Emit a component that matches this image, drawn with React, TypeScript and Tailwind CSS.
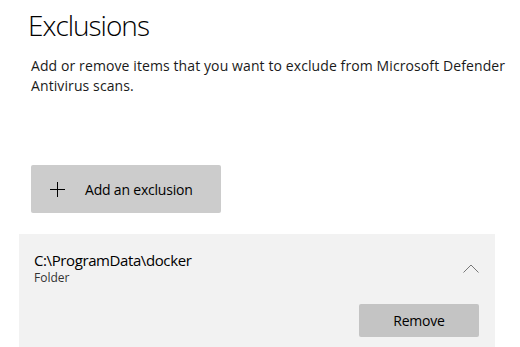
import React from "react";

export default function App() {
  return (
    <div
      className="w-[520px] h-[347px] overflow-hidden bg-white text-black"
      style={{ fontFamily: '"Open Sans", "Noto Sans", sans-serif' }}
    >
      <h1 className="pl-[28px] pt-[6px] text-[28px] leading-[38px] font-light tracking-[-1px]">
        Exclusions
      </h1>
      <p className="pl-[31px] pt-[12px] pr-[4px] text-[14px] leading-[20px] tracking-[0.1px] text-[#1a1a1a]">
        Add or remove items that you want to exclude from Microsoft Defender
        <br />
        Antivirus scans.
      </p>
      <div className="pl-[31px] pt-[69px]">
        <button className="flex h-[48px] w-[190px] items-center rounded-[2px] bg-[#cccccc] pl-[19px]">
          <svg width="15" height="15" viewBox="0 0 15 15" className="shrink-0">
            <path d="M7.5 0V15M0 7.5H15" stroke="#000" strokeWidth="1" />
          </svg>
          <span className="ml-[20px] text-[14px] tracking-[-0.2px]">Add an exclusion</span>
        </button>
      </div>
      <div className="ml-[19px] mt-[21px] w-[476px] h-[140px] bg-[#f2f2f2] pl-[15px] pr-[16px] pt-[16px]">
        <div className="flex items-start justify-between">
          <div>
            <div className="text-[15px] leading-[20px] tracking-[-0.4px]">C:\ProgramData\docker</div>
            <div className="text-[12px] leading-[16px] text-[#333]">Folder</div>
          </div>
          <svg width="16" height="9" viewBox="0 0 16 9" className="mt-[14px]">
            <path d="M0.5 8.5L8 1L15.5 8.5" fill="none" stroke="#777" strokeWidth="1" />
          </svg>
        </div>
        <div className="mt-[18px] flex justify-end">
          <button className="h-[33px] w-[120px] rounded-[2px] bg-[#c4c4c4] text-[14px] tracking-[-0.2px]">
            Remove
          </button>
        </div>
      </div>
    </div>
  );
}
